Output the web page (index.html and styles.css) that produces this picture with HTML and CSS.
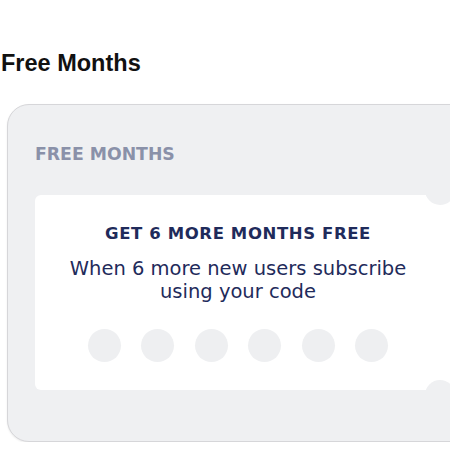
FILE: index.html
```html
<!DOCTYPE html>
<html lang="en">
<head>
  <meta charset="UTF-8" />
  <meta name="viewport" content="width=device-width, initial-scale=1.0" />
  <title>Free Months</title>
  <link rel="stylesheet" href="styles.css">
</head>
<body>
  <h1 class="page-title">Free Months</h1>

  <div class="card">
    <div class="card-label">FREE MONTHS</div>
    <div class="ticket">
      <div class="ticket-main">
        <h2>GET 6 MORE MONTHS FREE</h2>
        <p>When 6 more new users subscribe<br>using your code</p>
        <div class="dots">
          <span class="dot"></span>
          <span class="dot"></span>
          <span class="dot"></span>
          <span class="dot"></span>
          <span class="dot"></span>
          <span class="dot"></span>
        </div>
      </div>
      <div class="ticket-stub"></div>
    </div>
  </div>
</body>
</html>
```

FILE: styles.css
```css
body {
  margin: 0;
  padding: 0;
  background-color: white;
  overflow: hidden;
  font-family: "DejaVu Sans", Lato, sans-serif;
}
.page-title {
  font-family: "Liberation Sans", Arial, sans-serif;
  font-size: 23.5px;
  line-height: 28px;
  font-weight: bold;
  color: #111;
  margin: 49px 0 0 1px;
}
.card {
  width: 600px;
  margin: 27px 0 0 7px;
  padding: 37px 0 51px 27px;
  background-color: #eff0f2;
  border: 1px solid #d6d6d9;
  border-radius: 22px;
  box-shadow: 0 1px 2px rgba(0, 0, 0, 0.08);
}
.card-label {
  font-size: 17.3px;
  line-height: 24px;
  font-weight: bold;
  color: #8a91a9;
}
.ticket {
  position: relative;
  display: flex;
  height: 195px;
  margin-top: 29px;
  background-color: white;
  border-radius: 6px;
}
.ticket::before, .ticket::after {
  content: "";
  position: absolute;
  left: 390px;
  width: 30px;
  height: 30px;
  border-radius: 50%;
  background-color: #eff0f2;
}
.ticket::before {
  top: -20px;
}
.ticket::after {
  bottom: -20px;
}
.ticket-main {
  width: 406px;
  padding-top: 28px;
  text-align: center;
  color: #1f2b5b;
}
.ticket-main h2 {
  margin: 0;
  font-size: 16.5px;
  line-height: 22px;
  font-weight: bold;
  letter-spacing: 0.6px;
}
.ticket-main p {
  margin: 12px 0 0;
  font-size: 19.5px;
  line-height: 23px;
}
.dots {
  display: flex;
  justify-content: center;
  gap: 20.4px;
  margin-top: 26px;
}
.dot {
  width: 33px;
  height: 33px;
  border-radius: 50%;
  background-color: #eeeff1;
}
.ticket-stub {
  flex: 1;
}
```
